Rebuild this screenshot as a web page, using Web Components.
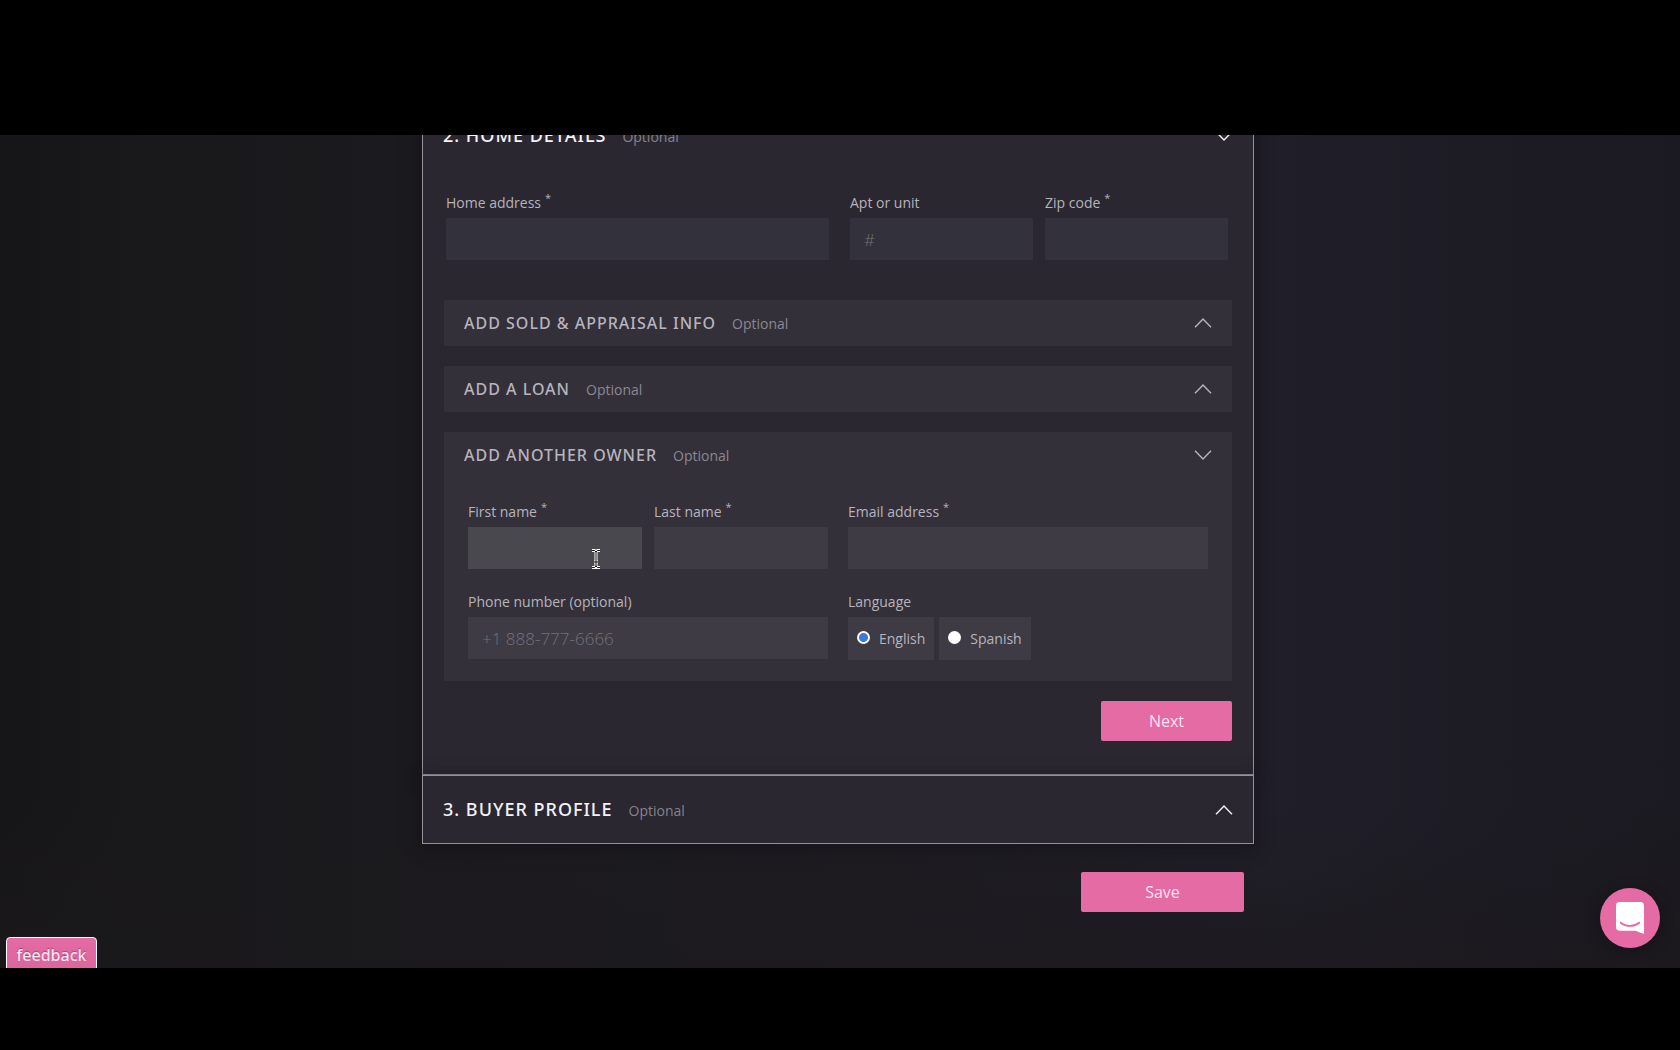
<!DOCTYPE html>
<html lang="en">
<head>
<meta charset="utf-8">
<title>Home details</title>
<style>
  body { margin: 0; background: #000; font-family: "Open Sans", "Noto Sans", sans-serif; }
</style>
</head>
<body>
<profile-app></profile-app>
<script>
const define = (name, markup, setup) => {
  const template = document.createElement('template');
  template.innerHTML = '<style>*{box-sizing:border-box}</style>' + markup;
  customElements.define(name, class extends HTMLElement {
    constructor() {
      super();
      this.attachShadow({ mode: 'open' }).appendChild(template.content.cloneNode(true));
    }
    connectedCallback() { if (setup) setup(this, this.shadowRoot); }
  });
};

define('chevron-icon', `
<style>
  :host { display: block; width: 18px; height: 18px; }
  :host([open]) svg { transform: rotate(180deg); }
  svg { display: block; width: 100%; height: 100%; }
</style>
<svg viewBox="0 0 18 18" fill="none" stroke="currentColor" stroke-width="1.4" aria-hidden="true"><path d="M1 13.2 9 5l8 8.2"/></svg>`);

/* Large bordered step of the form */
define('step-panel', `
<style>
  :host { display: block; background: #2a2730; border: 1px solid #94919c; box-shadow: 0 4px 16px rgba(18,15,24,.7); color: #f4f2f6; }
  button { all: unset; box-sizing: border-box; display: flex; align-items: center; width: 100%; height: 67px; padding: 0 20px; cursor: pointer; }
  .title { font: 500 18px/24px "Noto Sans", sans-serif; letter-spacing: 1px; padding-bottom: 1px; }
  .note { margin-left: 16px; font-size: 14px; line-height: 20px; color: #85828c; flex: 1; padding-top: 2px; }
  .body { padding: 0 21px 33px; color: #b7b4bd; }
  :host(:not([open])) .body { display: none; }
</style>
<button type="button"><span class="title"></span><span class="note">Optional</span><chevron-icon></chevron-icon></button>
<div class="body"><slot></slot></div>`, (el, root) => {
  root.querySelector('.title').textContent = el.getAttribute('heading');
  root.querySelector('chevron-icon').toggleAttribute('open', el.hasAttribute('open'));
});

/* Nested collapsible group */
define('sub-panel', `
<style>
  :host { display: block; background: #33303a; color: #b7b4bd; }
  button { all: unset; box-sizing: border-box; display: flex; align-items: center; width: 100%; height: 46px; padding: 0 20px; cursor: pointer; }
  .title { font: 500 16px/22px "Noto Sans", sans-serif; letter-spacing: 1px; }
  .note { margin-left: 16px; font-size: 14px; line-height: 20px; color: #8b8891; flex: 1; padding-top: 1px; }
  .body { padding: 24px 24px 21px; }
  :host(:not([open])) .body { display: none; }
</style>
<button type="button"><span class="title"></span><span class="note">Optional</span><chevron-icon></chevron-icon></button>
<div class="body"><slot></slot></div>`, (el, root) => {
  root.querySelector('.title').textContent = el.getAttribute('heading');
  root.querySelector('chevron-icon').toggleAttribute('open', el.hasAttribute('open'));
});

define('text-field', `
<style>
  :host { display: block; flex: 1; min-width: 0; position: relative; }
  label { display: block; font-size: 14px; line-height: 20px; margin-bottom: 5px; white-space: nowrap; }
  sup { font-size: 11px; line-height: 0; vertical-align: 6px; margin-left: 4px; }
  input { display: block; width: 100%; height: 42px; border: 0; border-radius: 1px; padding: 0 14px; outline: 0;
    background: var(--field, #33313c); color: #eee; font: 300 17px "Open Sans", sans-serif; }
  input::placeholder { color: #74717b; opacity: 1; }
  :host([hovered]) input { background: #4a484f; }
  ::slotted(svg) { position: absolute; left: 123px; top: 47px; width: 10px; height: 20px; }
</style>
<label for="in"><span></span></label>
<input id="in" type="text">
<slot></slot>`, (el, root) => {
  root.querySelector('span').textContent = el.getAttribute('label');
  if (el.hasAttribute('required')) {
    const s = document.createElement('sup');
    s.textContent = '*';
    root.querySelector('label').append(s);
  }
  root.querySelector('input').placeholder = el.getAttribute('placeholder') || '';
});

define('language-picker', `
<style>
  :host { display: block; }
  fieldset { border: 0; margin: 0; padding: 0; min-width: 0; }
  legend { padding: 0; font-size: 14px; line-height: 20px; margin-bottom: 5px; }
  .options { display: flex; gap: 5px; }
  label { display: flex; align-items: center; height: 43px; padding: 0 9px; background: #3e3b44; font-size: 14px; line-height: 20px; }
  input { appearance: none; width: 13px; height: 13px; margin: 0 9px 2px 0; border-radius: 50%; background: #fff; }
  input:checked { background: radial-gradient(circle, #3b78e0 0 4px, #fff 5px); }
</style>
<fieldset>
  <legend>Language</legend>
  <div class="options">
    <label><input type="radio" name="lang" checked>English</label>
    <label><input type="radio" name="lang">Spanish</label>
  </div>
</fieldset>`);

define('pink-button', `
<style>
  :host { display: block; width: 131px; }
  :host([wide]) { width: 163px; }
  button { display: block; width: 100%; height: 40px; border: 0; border-radius: 2px; background: #e46ba3; color: #f9e4f3; font: 400 16px/22px "Open Sans", sans-serif; padding: 0; }
</style>
<button type="button"><slot></slot></button>`);

define('field-row', `
<style>
  :host { display: grid; grid-template-columns: var(--cols, 1fr 1fr); column-gap: var(--gap, 20px); }
</style>
<slot></slot>`);

define('field-pair', `
<style>:host { display: flex; gap: 12px; min-width: 0; }</style>
<slot></slot>`);

define('feedback-tab', `
<style>
  :host { display: block; }
  button { height: 42px; width: 91px; padding: 0 0 6px; border: 1px solid #fff; border-radius: 4px; background: linear-gradient(#e46ba3, #d9649b); color: #fbe3f1;
    font: 500 16px/22px "Noto Sans", sans-serif; text-shadow: 0 -1px 1px rgba(90,40,80,.5); }
</style>
<button type="button">feedback</button>`);

define('chat-launcher', `
<style>
  :host { display: block; }
  button { display: flex; align-items: center; justify-content: center; width: 60px; height: 60px; padding: 0; border: 0; border-radius: 50%; background: #e46ba3; box-shadow: 0 2px 14px rgba(10,8,16,.4); }
  svg { width: 28px; height: 32px; display: block; }
</style>
<button type="button" aria-label="Open chat">
  <svg viewBox="0 0 28 32"><path fill="#fff" d="M28 32s-4.7-1.8-8.900-3.200H3.400C1.500 28.800 0 27.200 0 25.400V3.400C0 1.500 1.500 0 3.400 0h21.200C26.500 0 28 1.500 28 3.400z"/><path fill="none" stroke="#e46ba3" stroke-width="1.800" stroke-linecap="round" d="M4.800 20.700c5 4.200 13.400 4.200 18.400 0"/></svg>
</button>`);

define('profile-app', `
<style>
  :host { display: flex; flex-direction: column; height: 100vh; padding: 135px 0 82px; box-sizing: border-box; background: #000; }
  main { flex: 1; min-height: 0; overflow: hidden; position: relative; padding-right: 4px;
    background: linear-gradient(180deg, transparent 80%, rgba(27,25,28,.6)),
      linear-gradient(90deg, #161518 0, #19181b 10%, #1b1a1e 25%, #1e1c22 50%, #201e28 76%, #1d1b24 88%, #1b1921 100%); }
  .steps { max-width: 832px; margin: -34px auto 0; }
  .groups { display: grid; gap: 20px; margin-top: 40px; }
  .address { display: block; padding: 24px 4px 0 2px; --cols: 383fr 378fr; --gap: 21px; }
  .owner { display: grid; gap: 23px; --field: #3e3b44; }
  .end { display: flex; justify-content: flex-end; }
  .save { margin-top: 28px; padding-right: 10px; }
  feedback-tab { position: absolute; left: 6px; bottom: -11px; }
  chat-launcher { position: absolute; right: 20px; bottom: 20px; }
</style>
<main>
  <div class="steps">
    <step-panel heading="2. HOME DETAILS" open>
      <div class="address">
        <field-row>
          <text-field label="Home address" required></text-field>
          <field-pair>
            <text-field label="Apt or unit" placeholder="#"></text-field>
            <text-field label="Zip code" required></text-field>
          </field-pair>
        </field-row>
      </div>
      <div class="groups">
        <sub-panel heading="ADD SOLD &amp; APPRAISAL INFO"></sub-panel>
        <sub-panel heading="ADD A LOAN"></sub-panel>
        <sub-panel heading="ADD ANOTHER OWNER" open>
          <div class="owner">
            <field-row>
              <field-pair>
                <text-field label="First name" required hovered>
                  <svg viewBox="0 0 10 20" fill="none" aria-hidden="true"><path d="M1 1.500h2.500L5 3l1.500-1.500H9M5 3v14M1 18.500h2.500L5 17l1.500 1.500H9M3 13h4" stroke="#fff" stroke-width="3"/><path d="M1 1.500h2.500L5 3l1.500-1.500H9M5 3v14M1 18.500h2.500L5 17l1.500 1.500H9M3 13h4" stroke="#111" stroke-width="1"/></svg>
                </text-field>
                <text-field label="Last name" required></text-field>
              </field-pair>
              <text-field label="Email address" required></text-field>
            </field-row>
            <field-row>
              <text-field label="Phone number (optional)" placeholder="+1 888-777-6666"></text-field>
              <language-picker></language-picker>
            </field-row>
          </div>
        </sub-panel>
        <div class="end"><pink-button>Next</pink-button></div>
      </div>
    </step-panel>
    <step-panel heading="3. BUYER PROFILE"></step-panel>
    <div class="end save"><pink-button wide>Save</pink-button></div>
  </div>
  <feedback-tab></feedback-tab>
  <chat-launcher></chat-launcher>
</main>`);
</script>
</body>
</html>
